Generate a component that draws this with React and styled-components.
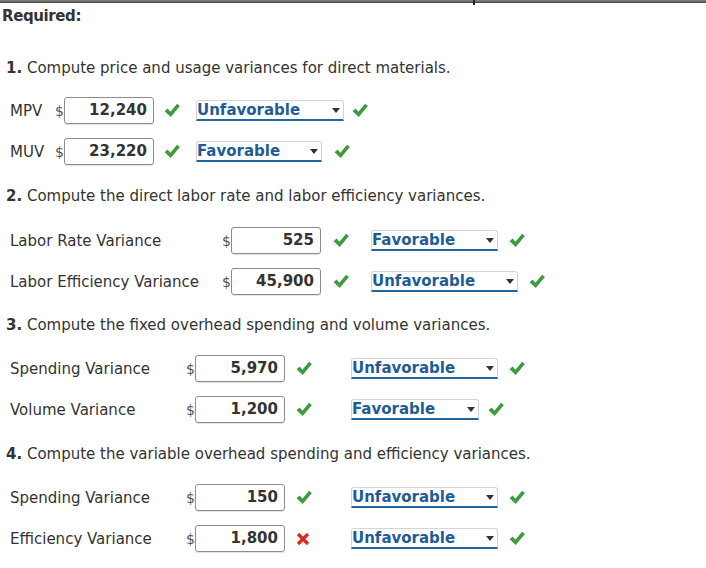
import React from "react";
import styled, { createGlobalStyle } from "styled-components";

const GlobalStyle = createGlobalStyle`
  html, body { margin: 0; padding: 0; background: #fff; }
  body { font-family: "DejaVu Sans", Verdana, sans-serif; color: #333; }
`;

const Page = styled.div`
  width: 706px;
  height: 568px;
  overflow: hidden;
  background: #fff;
`;

const TopBar = styled.div`
  display: flex;
  height: 3px;
  background: linear-gradient(#8a8a8a, #444);
`;

const BarSegment = styled.div`
  width: ${(p) => p.$w}px;
`;

const BarDivider = styled.div`
  width: 2px;
  height: 5px;
  background: #222;
`;

const Required = styled.div`
  font-weight: bold;
  font-size: 15px;
  letter-spacing: -0.4px;
  line-height: 20px;
  margin: 3px 0 0 2px;
  color: #333;
`;

const Section = styled.div`
  margin-top: ${(p) => p.$top}px;
`;

const Heading = styled.div`
  font-size: 15px;
  line-height: 20px;
  padding-left: 6px;
  color: #333;
  b { font-weight: bold; }
`;

const Rows = styled.div`
  margin-top: ${(p) => p.$gap}px;
  padding-left: 10px;
`;

const Row = styled.div`
  display: flex;
  align-items: center;
  height: 41px;
`;

const Label = styled.div`
  width: ${(p) => p.$w}px;
  font-size: 15px;
  color: #333;
  white-space: nowrap;
`;

const Dollar = styled.span`
  width: 9px;
  font-size: 14px;
  color: #555;
`;

const Amount = styled.div`
  box-sizing: border-box;
  width: 90px;
  height: 27px;
  border: 1px solid #8c8c8c;
  border-radius: 3px;
  box-shadow: 0 1px 1px rgba(0, 0, 0, 0.12);
  font-weight: bold;
  font-size: 15px;
  line-height: 25px;
  text-align: right;
  padding-right: 6px;
  color: #333;
`;

const MarkCell = styled.div`
  width: ${(p) => p.$w}px;
  display: flex;
  align-items: center;
  padding-left: ${(p) => p.$pad}px;
  box-sizing: border-box;
`;

const Select = styled.div`
  position: relative;
  box-sizing: border-box;
  width: ${(p) => p.$w}px;
  height: 21px;
  border: 1px solid #d4d4d4;
  border-bottom: 2px solid #23669d;
  border-radius: 3px 3px 0 0;
  padding-left: 0;
  font-weight: bold;
  font-size: 15px;
  line-height: 18px;
  color: #1f5c96;
  white-space: nowrap;
`;

const Arrow = styled.span`
  position: absolute;
  right: 3px;
  top: 7px;
  width: 0;
  height: 0;
  border-left: 4px solid transparent;
  border-right: 4px solid transparent;
  border-top: 5px solid #333;
`;

const AfterMark = styled.div`
  display: flex;
  align-items: center;
  margin-left: ${(p) => p.$gap}px;
`;

const Check = () => (
  <svg width="16" height="15" viewBox="0 0 15 14">
    <path d="M0.6 7.6 L3.4 5.2 L6 8.2 L12.3 0.6 L14.9 2.8 L6.3 13.1 Z" fill="#3d9a3d" />
  </svg>
);

const Cross = () => (
  <svg width="14" height="14" viewBox="0 0 14 14">
    <path d="M2 2 L12 12 M12 2 L2 12" stroke="#e5231e" strokeWidth="3.2" strokeLinecap="butt" />
  </svg>
);

const sections = [
  {
    num: "1.",
    text: " Compute price and usage variances for direct materials.",
    top: 32,
    gap: 12,
    label: 45,
    mark: 42,
    markPad: 10,
    rows: [
      { label: "MPV", value: "12,240", ok: true, sel: "Unfavorable", w: 148, after: 8 },
      { label: "MUV", value: "23,220", ok: true, sel: "Favorable", w: 126, after: 12 },
    ],
  },
  {
    num: "2.",
    text: " Compute the direct labor rate and labor efficiency variances.",
    top: 14,
    gap: 14,
    label: 212,
    mark: 50,
    markPad: 12,
    rows: [
      { label: "Labor Rate Variance", value: "525", ok: true, sel: "Favorable", w: 127, after: 11 },
      { label: "Labor Efficiency Variance", value: "45,900", ok: true, sel: "Unfavorable", w: 147, after: 11 },
    ],
  },
  {
    num: "3.",
    text: " Compute the fixed overhead spending and volume variances.",
    top: 13,
    gap: 13,
    label: 176,
    mark: 66,
    markPad: 11,
    rows: [
      { label: "Spending Variance", value: "5,970", ok: true, sel: "Unfavorable", w: 147, after: 11 },
      { label: "Volume Variance", value: "1,200", ok: true, sel: "Favorable", w: 128, after: 9 },
    ],
  },
  {
    num: "4.",
    text: " Compute the variable overhead spending and efficiency variances.",
    top: 14,
    gap: 13,
    label: 176,
    mark: 66,
    markPad: 11,
    rows: [
      { label: "Spending Variance", value: "150", ok: true, sel: "Unfavorable", w: 147, after: 11 },
      { label: "Efficiency Variance", value: "1,800", ok: false, sel: "Unfavorable", w: 147, after: 11 },
    ],
  },
];

export default function App() {
  return (
    <Page>
      <GlobalStyle />
      <TopBar>
        <BarSegment $w={473} />
        <BarDivider />
      </TopBar>
      <Required>Required:</Required>
      {sections.map((s) => (
        <Section key={s.num} $top={s.top}>
          <Heading>
            <b>{s.num}</b>
            {s.text}
          </Heading>
          <Rows $gap={s.gap}>
            {s.rows.map((r) => (
              <Row key={r.label}>
                <Label $w={s.label}>{r.label}</Label>
                <Dollar>$</Dollar>
                <Amount>{r.value}</Amount>
                <MarkCell $w={s.mark} $pad={s.markPad}>
                  {r.ok ? <Check /> : <Cross />}
                </MarkCell>
                <Select $w={r.w}>
                  {r.sel}
                  <Arrow />
                </Select>
                <AfterMark $gap={r.after}>
                  <Check />
                </AfterMark>
              </Row>
            ))}
          </Rows>
        </Section>
      ))}
    </Page>
  );
}
